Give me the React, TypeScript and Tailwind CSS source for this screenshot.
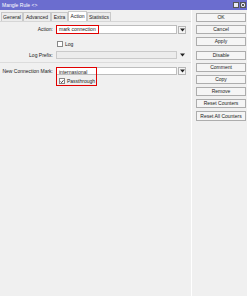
import React from "react";

const tabs = [
  { name: "General", w: "w-[22px]" },
  { name: "Advanced", w: "w-[28px]" },
  { name: "Extra", w: "w-[17px]" },
  { name: "Action", w: "w-[19px]" },
  { name: "Statistics", w: "w-[24px]" },
];
const buttons = ["OK", "Cancel", "Apply", "Disable", "Comment", "Copy", "Remove", "Reset Counters", "Reset All Counters"];

const Arrow = ({ boxed }: { boxed?: boolean }) => (
  <div
    className={`w-[8px] h-[8px] flex items-center justify-center ${
      boxed ? "border border-[#b5b5b5] bg-[#f4f4f4]" : ""
    }`}
  >
    <svg width="5" height="4" viewBox="0 0 5 4">
      <path d="M0 0.5H5L2.5 3.5Z" fill="#222" />
    </svg>
  </div>
);

const Check = ({ checked }: { checked?: boolean }) => (
  <div className="w-[6px] h-[6px] border border-[#888] bg-white flex items-center justify-center">
    {checked && (
      <svg width="5" height="5" viewBox="0 0 5 5">
        <path d="M0.7 2.5L2 3.8L4.3 1" stroke="#111" strokeWidth="1" fill="none" />
      </svg>
    )}
  </div>
);

export default function App() {
  return (
    <div className="w-[247px] h-[296px] bg-[#f0f0f0] flex flex-col font-['Liberation_Sans',Arial,sans-serif] text-[5px] leading-none text-[#222] overflow-hidden whitespace-nowrap">
      {/* title bar */}
      <div className="h-[10px] bg-[#6b6dcf] flex items-center justify-between pl-[2px] pr-[1px]">
        <span className="text-white">Mangle Rule &lt;&gt;</span>
        <div className="flex gap-[1px]">
          <div className="w-[6px] h-[6px] bg-[#e8e8f4] border border-[#555]" />
          <div className="w-[6px] h-[6px] bg-[#e8e8f4] border border-[#555] flex items-center justify-center">
            <svg width="4" height="4" viewBox="0 0 4 4">
              <path d="M0.5 0.5L3.5 3.5M3.5 0.5L0.5 3.5" stroke="#333" strokeWidth="0.8" />
            </svg>
          </div>
        </div>
      </div>

      <div className="flex flex-1">
        {/* left part */}
        <div className="w-[191px] flex flex-col">
          <div className="flex items-end h-[11px] pl-[1px]">
            {tabs.map((t) => (
              <div
                key={t.name}
                className={`${t.w} border border-b-0 border-[#c9c9c9] flex items-center justify-center ${
                  t.name === "Action" ? "h-[10px] bg-white" : "h-[9px] bg-[#ececec]"
                }`}
              >
                {t.name}
              </div>
            ))}
          </div>
          <div className="flex-1 border-t border-[#d6d6d6] bg-[#f0f0f0] flex flex-col pr-[5px] pt-[3px]">
            <div className="flex items-center h-[9px]">
              <span className="w-[54px] text-right pr-[1px]">Action:</span>
              <div className="ml-[2px] flex-1 h-[9px] bg-white border border-[#bdbdbd] flex items-center">
                <div className="h-[9px] w-[43px] -ml-[1px] border border-[#e00000] flex items-center pl-[2px]">mark connection</div>
              </div>
              <div className="ml-[1px]">
                <Arrow boxed />
              </div>
            </div>

            <div className="flex items-center h-[6px] mt-[7px] pl-[57px] gap-[2px]">
              <Check />
              <span>Log</span>
            </div>

            <div className="flex items-center h-[8px] mt-[4px]">
              <span className="w-[54px] text-right pr-[1px]">Log Prefix:</span>
              <div className="ml-[2px] flex-1 h-[8px] bg-[#ececec] border border-[#cacaca]" />
              <div className="ml-[1px]">
                <Arrow />
              </div>
            </div>

            <div className="h-[1px] bg-[#dcdcdc] mt-[3px] mr-[-5px]" />

            <div className="flex items-center h-[8px] mt-[4px]">
              <span className="w-[54px] text-right pr-[1px]">New Connection Mark:</span>
              <div className="ml-[2px] flex-1 h-[8px] bg-white border border-[#bdbdbd]" />
              <div className="ml-[1px]">
                <Arrow boxed />
              </div>
            </div>
            <div className="relative">
              <div className="absolute left-[56px] top-[-8px] w-[41px] h-[19px] border border-[#e00000] flex flex-col pl-[2px]">
                <div className="h-[8px] flex items-center">internasional</div>
                <div className="flex items-center gap-[2px] mt-[2px]">
                  <Check checked />
                  <span>Passthrough</span>
                </div>
              </div>
            </div>
          </div>
        </div>

        {/* separator */}
        <div className="w-[1px] bg-[#cfcfcf] border-r border-white" />

        {/* buttons */}
        <div className="flex-1 flex flex-col pl-[4px] pr-[1px] pt-[3px]">
          {buttons.map((b) => (
            <div
              key={b}
              className={`border border-[#adadad] bg-[#f5f5f5] flex items-center justify-center ${
                b === "Disable" ? "mt-[5px]" : b === "OK" ? "" : "mt-[3px]"
              } ${b === "Reset All Counters" ? "h-[10px]" : "h-[9px]"}`}
            >
              {b}
            </div>
          ))}
        </div>
      </div>
    </div>
  );
}
